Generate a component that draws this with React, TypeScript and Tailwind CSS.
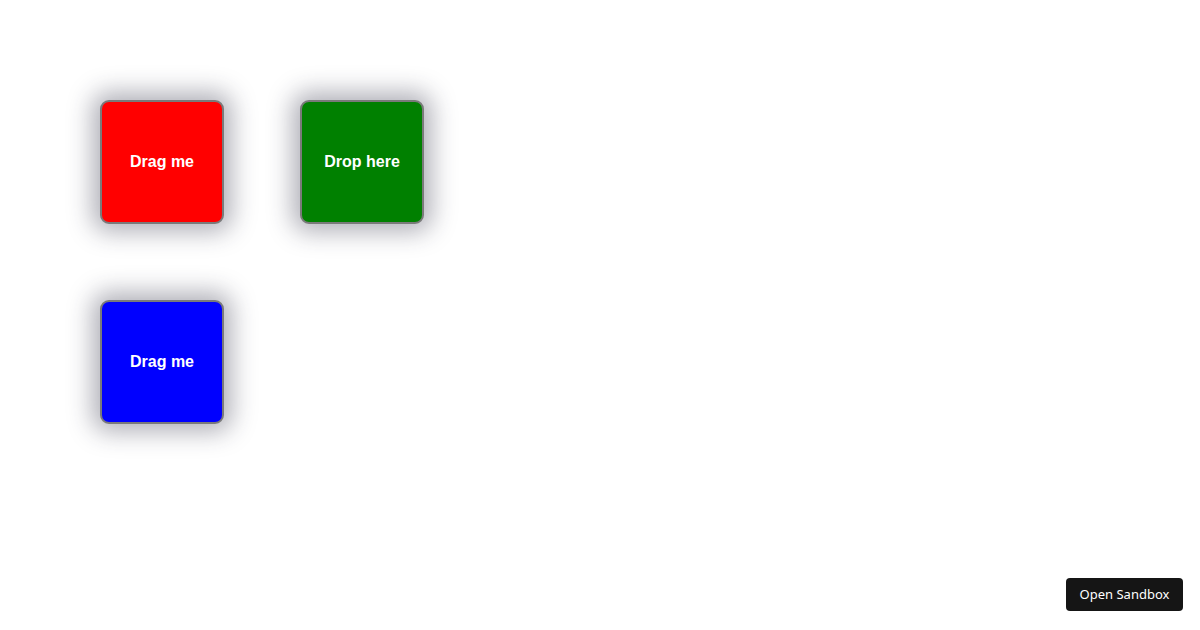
import React from "react";

function Box({ color, label }: { color: string; label: string }) {
  return (
    <div
      className={`w-[124px] h-[124px] box-border border-2 border-[#7a7a7a] rounded-[9px] flex items-center justify-center text-white font-bold text-[16px] shadow-[0_0_24px_8px_rgba(40,38,60,0.36)] ${color}`}
      style={{ fontFamily: '"Liberation Sans", Arial, sans-serif' }}
    >
      {label}
    </div>
  );
}

export default function App() {
  return (
    <div className="w-[1200px] h-[630px] bg-white relative overflow-hidden">
      <div className="pt-[100px] pl-[100px] flex flex-col gap-[76px]">
        <div className="flex gap-[76px]">
          <Box color="bg-[#ff0000]" label="Drag me" />
          <Box color="bg-[#008000]" label="Drop here" />
        </div>
        <div className="flex">
          <Box color="bg-[#0000ff]" label="Drag me" />
        </div>
      </div>
      <button
        className="absolute right-[17px] bottom-[19px] w-[117px] h-[33px] bg-[#151515] text-white text-[13px] rounded-[4px] flex items-center justify-center"
        style={{ fontFamily: '"Noto Sans", "Open Sans", sans-serif' }}
      >
        Open Sandbox
      </button>
    </div>
  );
}
